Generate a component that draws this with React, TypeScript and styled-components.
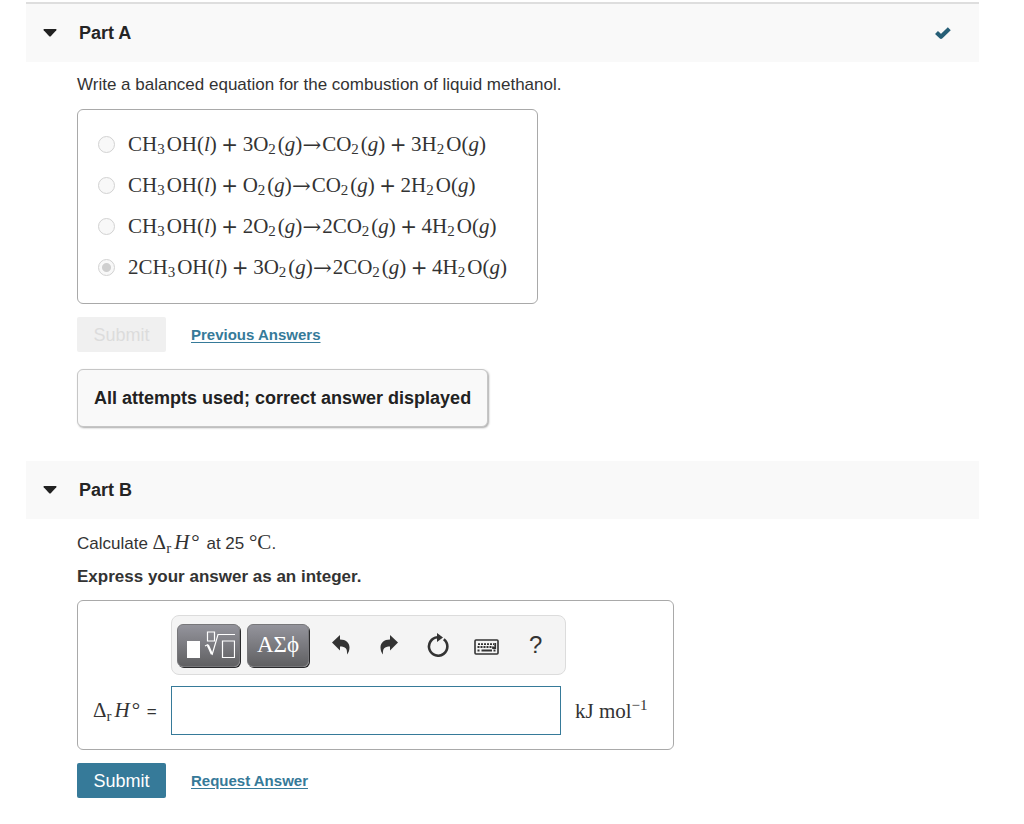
import React from "react";
import styled, { createGlobalStyle } from "styled-components";

const GlobalStyle = createGlobalStyle`
  *, *::before, *::after { box-sizing: border-box; }
  body {
    margin: 0;
    background: #fff;
    color: #333;
    font: 17px/20px "Liberation Sans", Arial, sans-serif;
  }
`;

const Page = styled.main`
  padding: 2px 45px 24px 26px;
`;

const PartHeader = styled.header<{ $first?: boolean }>`
  display: flex;
  align-items: center;
  justify-content: space-between;
  height: ${(p) => (p.$first ? 60 : 58)}px;
  padding: 0 27px 0 17px;
  background: #f9f9f9;
  border-top: ${(p) => (p.$first ? "2px solid #dedede" : "0")};
`;

const Toggle = styled.button`
  display: flex;
  align-items: center;
  gap: 22px;
  padding: 0;
  border: 0;
  background: none;
  color: #252525;
  font: bold 18px/24px "Liberation Sans", Arial, sans-serif;
`;

const PartBody = styled.section<{ $last?: boolean }>`
  display: flex;
  flex-direction: column;
  align-items: flex-start;
  padding: ${(p) => (p.$last ? "13px 0 0 51px" : "13px 0 34px 51px")};
`;

const Question = styled.p`
  margin: 0;
  line-height: 20px;
`;

const Instruction = styled.p`
  margin: 13px 0;
  font-weight: bold;
  line-height: 20px;
`;

const Choices = styled.fieldset`
  display: flex;
  flex-direction: column;
  gap: 13px;
  min-width: 461px;
  margin: 14px 0 0;
  padding: 20px 28px 22px 20px;
  border: 1px solid #a9a9a9;
  border-radius: 6px;
`;

const Choice = styled.label`
  display: flex;
  align-items: center;
  gap: 13px;
  height: 28px;
`;

const Radio = styled.input`
  appearance: none;
  width: 17px;
  height: 17px;
  margin: 0;
  border: 1px solid #d2d2d2;
  border-radius: 50%;
  background: #f8f8f8;
  &:checked {
    background: radial-gradient(circle, #cfcfcf 0 4px, #f8f8f8 5px);
  }
`;

const MathText = styled.span`
  font: 21px/28px "Liberation Serif", "Times New Roman", serif;
  white-space: nowrap;
`;

const Sub = styled.sub`
  margin-right: 2px;
  font-size: 15px;
  line-height: 0;
  vertical-align: -3px;
`;

const Sup = styled.sup`
  font-size: 15px;
  line-height: 0;
  vertical-align: 8px;
`;

const Operator = styled.span<{ $gap?: number }>`
  margin: 0 ${(p) => p.$gap ?? 0}px;
  font-family: "DejaVu Math TeX Gyre", "Liberation Serif", serif;
  font-size: 20px;
  line-height: 0;
`;

const Small = styled.span`
  margin-right: 3px;
  font-size: 15px;
  vertical-align: -4px;
  line-height: 0;
`;

const Inline = styled.span`
  font: 21px/20px "Liberation Serif", "Times New Roman", serif;
  white-space: nowrap;
`;

const Degree = styled.span`
  margin: 0 2px;
`;

const Actions = styled.div`
  display: flex;
  align-items: center;
  gap: 25px;
  margin-top: 13px;
`;

const SubmitButton = styled.button`
  min-width: 89px;
  height: 35px;
  padding: 0 16px;
  border: 0;
  border-radius: 2px;
  background: #367a99;
  color: #fff;
  font: 18px/24px "Liberation Sans", Arial, sans-serif;
  &:disabled {
    background: #f0f0f0;
    color: #dcdcdc;
  }
`;

const ActionLink = styled.a`
  color: #367a99;
  font-size: 15px;
  font-weight: bold;
  text-underline-offset: 2px;
`;

const Notice = styled.div`
  margin-top: 17px;
  padding: 16px;
  border: 1px solid #c6c6c6;
  border-radius: 6px;
  background: #f9f9f9;
  box-shadow: 1px 1px 2px #aaa;
  color: #222;
  font: bold 18px/24px "Liberation Sans", Arial, sans-serif;
`;

const AnswerBox = styled.div`
  display: grid;
  grid-template-columns: 78px 390px auto;
  align-items: center;
  row-gap: 11px;
  padding: 14px 25px 14px 15px;
  border: 1px solid #a9a9a9;
  border-radius: 6px;
`;

const Toolbar = styled.div`
  grid-column: 2 / 4;
  justify-self: start;
  display: flex;
  align-items: center;
  width: 395px;
  height: 60px;
  padding: 0 5px;
  border: 1px solid #dcdcdc;
  border-radius: 8px;
  background: #f4f4f4;
`;

const PaletteButton = styled.button`
  display: flex;
  align-items: center;
  justify-content: center;
  width: 63px;
  height: 43px;
  margin-right: 7px;
  padding: 0;
  border: 1px solid #77777a;
  border-radius: 6px;
  background: linear-gradient(#94949c, #606062);
  box-shadow: 1px 1px 0 #2a2a2c;
  color: #fff;
  font: 23px/28px "Liberation Serif", "Times New Roman", serif;
`;

const ToolButton = styled.button`
  display: flex;
  align-items: center;
  justify-content: center;
  width: 49px;
  height: 44px;
  padding: 0;
  border: 0;
  background: none;
  color: #333;
  font: 24px/28px "Liberation Sans", Arial, sans-serif;
`;

const AnswerLabel = styled.label`
  white-space: nowrap;
`;

const AnswerInput = styled.input`
  width: 100%;
  height: 49px;
  padding: 0 8px;
  border: 1px solid #367a99;
  outline: 0;
  background: #fff;
  font-size: 18px;
`;

const Unit = styled.span`
  padding-left: 14px;
  font: 21px/24px "Liberation Serif", "Times New Roman", serif;
`;

const Caret = () => (
  <svg width="14" height="8" viewBox="0 0 14 8" aria-hidden="true">
    <path d="M1 0h12q1 .4.3 1.200L8 7Q7 8 6 7L.7 1.200Q0 .4 1 0z" fill="#222" />
  </svg>
);

const Check = () => (
  <svg width="18" height="15" viewBox="0 0 18 15" role="img" aria-label="Correct">
    <path d="M2.500 6.500L7 10.800L15.300 2.800" fill="none" stroke="#275f77" strokeWidth="4.200" strokeLinejoin="round" />
  </svg>
);

const TemplateIcon = () => (
  <svg width="54" height="28" viewBox="-2 0 54 28" fill="none" stroke="#fff" aria-hidden="true">
    <path d="M4 10h13v17H4z" fill="#fff" stroke="none" />
    <path d="M24.500 1h7v9h-7zM39.500 10h12v16.500h-12z" strokeWidth="1.200" />
    <path d="M22 15l3-1.500" strokeWidth="1.200" />
    <path d="M24.800 14l4 9" strokeWidth="2.200" />
    <path d="M29 24l6-20.500h17" strokeWidth="1.200" />
  </svg>
);

const arrow = "M0 7.500L8 0v4.500c6 0 9.500 3.500 9.500 8 0 3-1 5-2.500 7 .5-6-1.500-8-7-8v4z";

const Undo = () => (
  <svg width="18" height="20" viewBox="0 0 18 20" fill="#333" aria-hidden="true">
    <path d={arrow} />
  </svg>
);

const Redo = () => (
  <svg width="18" height="20" viewBox="0 0 18 20" fill="#333" aria-hidden="true">
    <path d={arrow} transform="translate(18 0) scale(-1 1)" />
  </svg>
);

const Reset = () => (
  <svg width="22" height="24" viewBox="0 0 22 24" aria-hidden="true">
    <path d="M16.800 6.200A9.200 9.200 0 1 1 10.500 4.300" fill="none" stroke="#333" strokeWidth="2.600" />
    <path d="M10 0l6 4.500L10 9z" fill="#333" />
  </svg>
);

const Keyboard = () => (
  <svg width="25" height="20" viewBox="0 0 25 20" fill="none" stroke="#333" aria-hidden="true">
    <rect x="1" y="5" width="23" height="14" rx="1" strokeWidth="1.600" />
    <path d="M4 9.200h16M3.500 12h16" strokeWidth="1.800" strokeDasharray="2 1" />
    <path d="M21.200 8v5h-3M3.500 15.500h2M7.500 15.500h10.500M19.500 15.500h2" strokeWidth="1.800" />
  </svg>
);

const Equation = ({ coefficients }: { coefficients: string[] }) => {
  const [methanol, oxygen, dioxide, water] = coefficients;
  return (
    <MathText>
      {methanol}CH<Sub>3</Sub>OH(<i>l</i>)<Operator $gap={5}>+</Operator>
      {oxygen}O<Sub>2</Sub>(<i>g</i>)<Operator>→</Operator>{dioxide}CO<Sub>2</Sub>(<i>g</i>)
      <Operator $gap={5}>+</Operator>
      {water}H<Sub>2</Sub>O(<i>g</i>)
    </MathText>
  );
};

const Enthalpy = () => (
  <Inline>
    Δ<Small>r</Small>
    <i>H</i><Degree>°</Degree>
  </Inline>
);

const choices = [
  ["", "3", "", "3"],
  ["", "", "", "2"],
  ["", "2", "2", "4"],
  ["2", "3", "2", "4"],
];

export default function App() {
  return (
    <Page>
      <GlobalStyle />
      <PartHeader $first>
        <Toggle type="button" aria-expanded="true">
          <Caret />
          Part A
        </Toggle>
        <Check />
      </PartHeader>
      <PartBody>
        <Question>Write a balanced equation for the combustion of liquid methanol.</Question>
        <Choices aria-label="Balanced equation">
          {choices.map((c, i) => (
            <Choice key={i}>
              <Radio type="radio" name="equation" disabled defaultChecked={i === 3} />
              <Equation coefficients={c} />
            </Choice>
          ))}
        </Choices>
        <Actions>
          <SubmitButton type="button" disabled>Submit</SubmitButton>
          <ActionLink href="#previous">Previous Answers</ActionLink>
        </Actions>
        <Notice>All attempts used; correct answer displayed</Notice>
      </PartBody>
      <PartHeader>
        <Toggle type="button" aria-expanded="true">
          <Caret />
          Part B
        </Toggle>
      </PartHeader>
      <PartBody $last>
        <Question>
          Calculate <Enthalpy /> at 25 <Inline>°C</Inline>.
        </Question>
        <Instruction>Express your answer as an integer.</Instruction>
        <AnswerBox>
          <Toolbar role="toolbar" aria-label="Equation tools">
            <PaletteButton type="button" aria-label="Templates"><TemplateIcon /></PaletteButton>
            <PaletteButton type="button">ΑΣϕ</PaletteButton>
            <ToolButton type="button" aria-label="Undo"><Undo /></ToolButton>
            <ToolButton type="button" aria-label="Redo"><Redo /></ToolButton>
            <ToolButton type="button" aria-label="Reset"><Reset /></ToolButton>
            <ToolButton type="button" aria-label="Keyboard shortcuts"><Keyboard /></ToolButton>
            <ToolButton type="button" aria-label="Help">?</ToolButton>
          </Toolbar>
          <AnswerLabel htmlFor="enthalpy"><Enthalpy /> =</AnswerLabel>
          <AnswerInput id="enthalpy" type="text" />
          <Unit>kJ mol<Sup>−1</Sup></Unit>
        </AnswerBox>
        <Actions>
          <SubmitButton type="button">Submit</SubmitButton>
          <ActionLink href="#request">Request Answer</ActionLink>
        </Actions>
      </PartBody>
    </Page>
  );
}
